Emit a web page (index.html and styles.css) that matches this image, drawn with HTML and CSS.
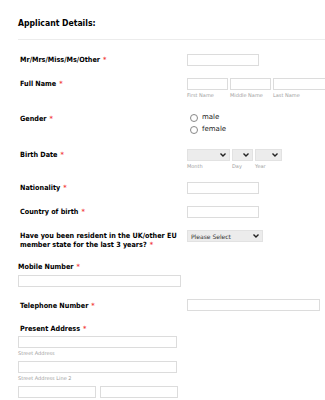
FILE: index.html
```html
<!DOCTYPE html>
<html lang="en">
<head>
  <meta charset="UTF-8" />
  <meta name="viewport" content="width=device-width, initial-scale=1.0"/>
  <title>Applicant Details</title>
  <link rel="stylesheet" href="styles.css">
</head>
<body>
  <div class="form">
    <div class="form-header">
      <h2>Applicant Details:</h2>
    </div>

    <div class="line">
      <label class="form-label">Mr/Mrs/Miss/Ms/Other<span class="req">*</span></label>
      <div class="input-box"><div class="field w72"></div></div>
    </div>

    <div class="line">
      <label class="form-label">Full Name<span class="req">*</span></label>
      <div class="input-box row-fields">
        <div class="sub"><div class="field w41"></div><span class="sublabel">First Name</span></div>
        <div class="sub"><div class="field w41"></div><span class="sublabel">Middle Name</span></div>
        <div class="sub"><div class="field w60"></div><span class="sublabel">Last Name</span></div>
      </div>
    </div>

    <div class="line gender">
      <label class="form-label">Gender<span class="req">*</span></label>
      <div class="input-box">
        <div class="radio"><span class="dot"></span>male</div>
        <div class="radio"><span class="dot"></span>female</div>
      </div>
    </div>

    <div class="line">
      <label class="form-label">Birth Date<span class="req">*</span></label>
      <div class="input-box row-fields">
        <div class="sub">
          <div class="select w43"><span></span>
            <svg width="6" height="4" viewBox="0 0 6 4"><path d="M0.5 0.5 L3 3 L5.5 0.5" fill="none" stroke="#222" stroke-width="1.4"/></svg>
          </div>
          <span class="sublabel">Month</span>
        </div>
        <div class="sub">
          <div class="select w21"><span></span>
            <svg width="6" height="4" viewBox="0 0 6 4"><path d="M0.5 0.5 L3 3 L5.5 0.5" fill="none" stroke="#222" stroke-width="1.4"/></svg>
          </div>
          <span class="sublabel">Day</span>
        </div>
        <div class="sub">
          <div class="select w27"><span></span>
            <svg width="6" height="4" viewBox="0 0 6 4"><path d="M0.5 0.5 L3 3 L5.5 0.5" fill="none" stroke="#222" stroke-width="1.4"/></svg>
          </div>
          <span class="sublabel">Year</span>
        </div>
      </div>
    </div>

    <div class="line">
      <label class="form-label">Nationality<span class="req">*</span></label>
      <div class="input-box"><div class="field w72"></div></div>
    </div>

    <div class="line">
      <label class="form-label">Country of birth<span class="req">*</span></label>
      <div class="input-box"><div class="field w72"></div></div>
    </div>

    <div class="line resident">
      <label class="form-label">Have you been resident in the UK/other EU<br>member state for the last 3 years?<span class="req">*</span></label>
      <div class="input-box">
        <div class="select w76"><span>Please Select</span>
          <svg width="6" height="4" viewBox="0 0 6 4"><path d="M0.5 0.5 L3 3 L5.5 0.5" fill="none" stroke="#222" stroke-width="1.4"/></svg>
        </div>
      </div>
    </div>

    <div class="line top">
      <label class="form-label">Mobile Number<span class="req">*</span></label>
      <div class="field w163"></div>
    </div>

    <div class="line tel">
      <label class="form-label">Telephone Number<span class="req">*</span></label>
      <div class="input-box"><div class="field w133"></div></div>
    </div>

    <div class="line top address">
      <label class="form-label">Present Address<span class="req">*</span></label>
      <div class="sub"><div class="field w159"></div><span class="sublabel">Street Address</span></div>
      <div class="sub"><div class="field w159"></div><span class="sublabel">Street Address Line 2</span></div>
      <div class="row-fields">
        <div class="field w78"></div>
        <div class="field w78"></div>
      </div>
    </div>
  </div>
</body>
</html>
```

FILE: styles.css
```css
body {
  margin: 0;
  padding: 0;
  background: #fff;
  font-family: "DejaVu Sans Condensed", "DejaVu Sans", Verdana, sans-serif;
  color: #000;
}
.form {
  padding: 0 0 0 18px;
}
.form-header {
  padding: 17px 0 10px 0;
  border-bottom: 1px solid #ececec;
  margin-bottom: 14px;
}
.form-header h2 {
  margin: 0;
  font-size: 8.6px;
  line-height: 12px;
  font-weight: bold;
}
.line {
  display: flex;
  align-items: flex-start;
  padding: 0 0 12px 2px;
}
.form-label {
  width: 167px;
  flex-shrink: 0;
  font-size: 7.2px;
  line-height: 8.6px;
  font-weight: bold;
  padding-top: 2px;
  padding-right: 8px;
  box-sizing: border-box;
}
.req {
  color: #f23a3c;
  margin-left: 3px;
}
.input-box {
  display: flex;
  flex-direction: column;
}
.row-fields {
  display: flex;
  flex-direction: row;
  gap: 2px;
}
.sub {
  display: flex;
  flex-direction: column;
}
.field {
  height: 12px;
  box-sizing: border-box;
  border: 1px solid #dcdcdc;
  background: #fff;
}
.select {
  height: 12px;
  box-sizing: border-box;
  background: #ececec;
  border: 1px solid #e2e2e2;
  display: flex;
  align-items: center;
  justify-content: space-between;
  padding: 0 3px 0 3px;
  font-family: "DejaVu Sans", Verdana, sans-serif;
  font-size: 6px;
  color: #333;
}
.sublabel {
  font-family: "DejaVu Sans", Verdana, sans-serif;
  font-size: 5px;
  line-height: 8px;
  color: #a0a0a0;
  padding-top: 1px;
}
.w21 { width: 21px; }
.w27 { width: 27px; }
.w41 { width: 41px; }
.w43 { width: 43px; }
.w60 { width: 60px; }
.w72 { width: 72px; }
.w76 { width: 76px; }
.w78 { width: 78px; }
.w133 { width: 133px; }
.w159 { width: 159px; }
.w163 { width: 163px; }

.gender {
  padding-bottom: 14px;
}
.gender .form-label {
  padding-top: 4px;
}
.radio {
  display: flex;
  align-items: center;
  height: 12px;
  font-family: "DejaVu Sans", Verdana, sans-serif;
  font-size: 7px;
  color: #222;
}
.dot {
  display: inline-block;
  width: 6px;
  height: 6px;
  border: 1px solid #888;
  border-radius: 50%;
  margin: 2px 4px 0 3px;
}
.line.top {
  flex-direction: column;
  padding-left: 0;
}
.line.top .form-label {
  width: auto;
  padding-bottom: 3px;
}
.tel {
  padding-bottom: 12px;
}
.tel .form-label {
  padding-top: 3px;
}
.address .form-label {
  padding-left: 2px;
  padding-bottom: 5px;
}
.address .sub {
  margin-bottom: 4px;
}
.address .row-fields {
  gap: 4px;
}
```
